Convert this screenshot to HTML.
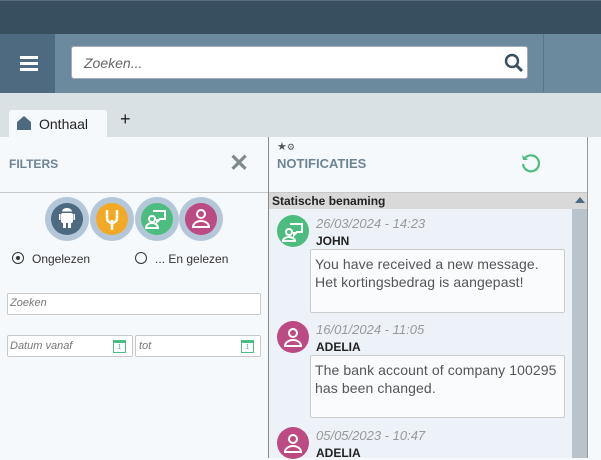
<html><head><style>
*{margin:0;padding:0;box-sizing:border-box}
body{width:601px;height:458px;overflow:hidden;font-family:"Liberation Sans",sans-serif;background:#f5f9fc;position:relative}
.a{position:absolute}
.t{font-size:12px;color:#333}
.msg{font-size:14px;line-height:18px;color:#555;letter-spacing:0.1px;white-space:nowrap;overflow:hidden}
</style></head><body>
<div class="a" style="left:0;top:0;width:601px;height:34px;background:#374f5f;border-top:1px solid #5a6f7d"></div>
<div class="a" style="left:0;top:34px;width:601px;height:59px;background:#6b8a9e"></div>
<div class="a" style="left:0;top:34px;width:55px;height:59px;background:#4d6a80"></div>
<div class="a" style="left:20px;top:56px;width:18px;height:3px;background:#fff;box-shadow:0 6px 0 #fff,0 12px 0 #fff"></div>
<div class="a" style="left:543px;top:34px;width:1px;height:58px;background:#58758a"></div>
<div class="a" style="left:71px;top:46px;width:457px;height:33px;background:#fff;border:1px solid #aab;border-radius:3px"></div>
<div class="a" style="left:84px;top:55px;font-size:14px;font-style:italic;color:#666">Zoeken...</div>
<svg class="a" style="left:504px;top:53px" width="20" height="20"><circle cx="8" cy="8" r="6" fill="none" stroke="#374f5f" stroke-width="2.4"/><path d="M12 12L18 18" stroke="#374f5f" stroke-width="3"/></svg>
<div class="a" style="left:0;top:93px;width:601px;height:44px;background:#d9e1e5"></div>
<div class="a" style="left:9px;top:110px;width:98px;height:28px;background:#f5f9fc;border-radius:3px 3px 0 0"></div>
<svg class="a" style="left:16px;top:115px" width="16" height="16"><path d="M8 1L15 7V15H1V7Z" fill="#4d6a80"/></svg>
<div class="a" style="left:39px;top:116px;font-size:14px;color:#222">Onthaal</div>
<div class="a" style="left:120px;top:109px;font-size:18px;color:#222">+</div>
<div class="a" style="left:9px;top:157px;font-size:12px;font-weight:bold;color:#6e8394">FILTERS</div>
<div class="a" style="left:229px;top:149px;font-size:24px;font-weight:bold;color:#7f8a89">✕</div>
<div class="a" style="left:0;top:192px;width:268px;height:1px;background:#c7c7c7"></div>
<div class="a" style="left:268px;top:137px;width:1px;height:321px;background:#888"></div>
<svg class="a" style="left:44px;top:196px" width="182" height="46">
<g stroke="none"><circle cx="23" cy="23" r="22" fill="#b3c7d8"/><circle cx="23" cy="23" r="16" fill="#4d6a80"/>
<circle cx="68" cy="23" r="22" fill="#b3c7d8"/><circle cx="68" cy="23" r="16" fill="#f3a826"/>
<circle cx="113" cy="23" r="22" fill="#b3c7d8"/><circle cx="113" cy="23" r="16" fill="#4cbd7e"/>
<circle cx="157" cy="23" r="22" fill="#b3c7d8"/><circle cx="157" cy="23" r="16" fill="#bb4b82"/></g>
<rect x="17" y="17" width="12" height="10" rx="2" fill="#fff"/><rect x="15" y="18" width="1.5" height="6" fill="#fff"/><rect x="29.5" y="18" width="1.5" height="6" fill="#fff"/><rect x="19" y="27" width="3" height="5" fill="#fff"/><rect x="24" y="27" width="3" height="5" fill="#fff"/><path d="M18 15.5a5 3.5 0 0 1 10 0z" fill="#fff"/>
<path d="M63 14v8a5 5 0 0 0 10 0v-8M68 24v10" stroke="#fff" stroke-width="2.5" fill="none"/>
<circle cx="108" cy="23" r="3" fill="none" stroke="#fff" stroke-width="2"/><path d="M102 32a6 5 0 0 1 12 0z" fill="none" stroke="#fff" stroke-width="2"/><path d="M109 15h12v8h-5l-3 3v-3" fill="none" stroke="#fff" stroke-width="2"/>
<circle cx="157" cy="18" r="4" fill="none" stroke="#fff" stroke-width="2"/><path d="M149 31a8 6 0 0 1 16 0z" fill="none" stroke="#fff" stroke-width="2"/>
</svg>
<div class="a" style="left:12px;top:252px;width:12px;height:12px;border:1px solid #333;border-radius:50%"></div>
<div class="a" style="left:16px;top:256px;width:4px;height:4px;background:#333;border-radius:50%"></div>
<div class="a t" style="left:32px;top:252px">Ongelezen</div>
<div class="a" style="left:135px;top:252px;width:12px;height:12px;border:1px solid #333;border-radius:50%"></div>
<div class="a t" style="left:155px;top:252px">... En gelezen</div>
<div class="a" style="left:7px;top:293px;width:254px;height:22px;background:#fff;border:1px solid #c9c9c9;border-radius:2px"></div>
<div class="a" style="left:10px;top:297px;font-size:11px;font-style:italic;color:#777">Zoeken</div>
<div class="a" style="left:7px;top:335px;width:126px;height:22px;background:#fff;border:1px solid #c9c9c9;border-radius:2px"></div>
<div class="a" style="left:10px;top:340px;font-size:11px;font-style:italic;color:#777">Datum vanaf</div>
<div class="a" style="left:135px;top:335px;width:126px;height:22px;background:#fff;border:1px solid #c9c9c9;border-radius:2px"></div>
<div class="a" style="left:139px;top:340px;font-size:11px;font-style:italic;color:#777">tot</div>
<div class="a" style="left:113px;top:340px;width:13px;height:13px;border:1.5px solid #4cbd7e;border-top-width:3px;font-size:7px;color:#4cbd7e;text-align:center;line-height:9px">1</div>
<div class="a" style="left:241px;top:340px;width:13px;height:13px;border:1.5px solid #4cbd7e;border-top-width:3px;font-size:7px;color:#4cbd7e;text-align:center;line-height:9px">1</div>
<div class="a" style="left:587px;top:137px;width:1px;height:321px;background:#999"></div>
<div class="a" style="left:277px;top:140px;font-size:11px;color:#555">★<span style="font-size:9px">⚙</span></div>
<div class="a" style="left:277px;top:156px;font-size:13px;font-weight:bold;color:#6e8394">NOTIFICATIES</div>
<svg class="a" style="left:520px;top:152px" width="22" height="22"><path d="M5 6A8 8 0 1 1 3 12" fill="none" stroke="#4cbd7e" stroke-width="2.2"/><path d="M2 3l1 5h5z" fill="#4cbd7e"/></svg>
<div class="a" style="left:269px;top:192px;width:318px;height:1px;background:#c7c7c7"></div>
<div class="a" style="left:269px;top:193px;width:318px;height:16px;background:#d9d9d9"></div>
<div class="a" style="left:272px;top:194px;font-size:12px;font-weight:bold;color:#222">Statische benaming</div>
<div class="a" style="left:575px;top:197px;width:0;height:0;border:5px solid transparent;border-bottom:6px solid #4d6a80;border-top:0"></div>
<div class="a" style="left:269px;top:209px;width:303px;height:249px;background:#edf2f9"></div>
<div class="a" style="left:572px;top:209px;width:15px;height:249px;background:#b9c3cc"></div>
<svg class="a" style="left:277px;top:215px" width="33" height="33"><circle cx="16" cy="16" r="16" fill="#4cbd7e"/><circle cx="12" cy="17" r="3" fill="none" stroke="#fff" stroke-width="2"/><path d="M6 26a6 4 0 0 1 12 0z" fill="none" stroke="#fff" stroke-width="2"/><path d="M13 9h12v8h-5l-3 3v-3" fill="none" stroke="#fff" stroke-width="2"/></svg>
<div class="a" style="left:316px;top:216px;font-size:13px;font-style:italic;color:#999">26/03/2024 - 14:23</div>
<div class="a" style="left:316px;top:234px;font-size:12px;font-weight:bold;color:#222">JOHN</div>
<div class="a msg" style="left:310px;top:249px;width:255px;height:64px;background:#f9fbfd;border:1px solid #ccc;border-radius:2px;padding:5px 4px">You have received a new message.<br>Het kortingsbedrag is aangepast!</div>
<svg class="a" style="left:277px;top:321px" width="33" height="33"><circle cx="16" cy="16" r="16" fill="#bb4b82"/><circle cx="16" cy="12" r="4" fill="none" stroke="#fff" stroke-width="2"/><path d="M8 25a8 6 0 0 1 16 0z" fill="none" stroke="#fff" stroke-width="2"/></svg>
<div class="a" style="left:316px;top:322px;font-size:13px;font-style:italic;color:#999">16/01/2024 - 11:05</div>
<div class="a" style="left:316px;top:340px;font-size:12px;font-weight:bold;color:#222">ADELIA</div>
<div class="a msg" style="left:310px;top:355px;width:255px;height:63px;background:#f9fbfd;border:1px solid #ccc;border-radius:2px;padding:5px 4px">The bank account of company 100295<br>has been changed.</div>
<svg class="a" style="left:277px;top:427px" width="33" height="33"><circle cx="16" cy="16" r="16" fill="#bb4b82"/><circle cx="16" cy="12" r="4" fill="none" stroke="#fff" stroke-width="2"/><path d="M8 25a8 6 0 0 1 16 0z" fill="none" stroke="#fff" stroke-width="2"/></svg>
<div class="a" style="left:316px;top:428px;font-size:13px;font-style:italic;color:#999">05/05/2023 - 10:47</div>
<div class="a" style="left:316px;top:446px;font-size:12px;font-weight:bold;color:#222">ADELIA</div>
</body></html>
